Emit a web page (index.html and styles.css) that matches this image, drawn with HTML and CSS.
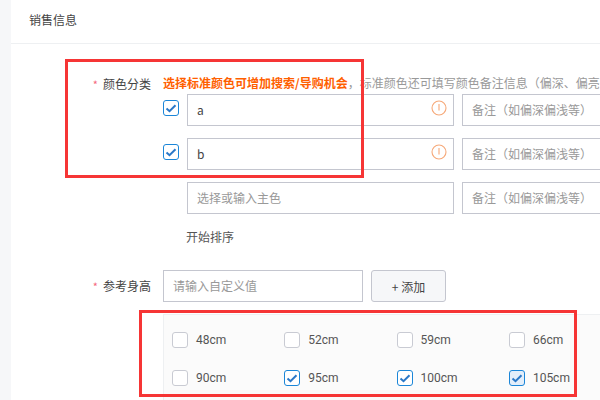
FILE: index.html
```html
<!DOCTYPE html>
<html lang="zh">
<head>
<meta charset="utf-8">
<title>销售信息</title>
<link rel="stylesheet" href="styles.css">
</head>
<body>
<div class="page">
  <aside class="gutter"></aside>
  <main class="card">
    <header class="card-head">销售信息</header>
    <section class="form">
      <div class="row color-row">
        <div class="label"><span class="star">*</span>颜色分类</div>
        <div class="field">
          <div class="hint"><b>选择标准颜色可增加搜索/导购机会</b>，标准颜色还可填写颜色备注信息（偏深、偏亮等）</div>
          <div class="color-line">
            <span class="check on lift"><svg viewBox="0 0 14 14"><path d="M2.5 7.5 5.5 10.2 11.5 4.2"/></svg></span>
            <div class="input main-color"><span class="val">a</span>
              <svg class="info" viewBox="0 0 16 16"><circle cx="8" cy="8" r="7"/><path d="M8 4v6.5"/></svg>
            </div>
            <div class="input note ph">备注（如偏深偏浅等）</div>
          </div>
          <div class="color-line">
            <span class="check on lift"><svg viewBox="0 0 14 14"><path d="M2.5 7.5 5.5 10.2 11.5 4.2"/></svg></span>
            <div class="input main-color"><span class="val">b</span>
              <svg class="info" viewBox="0 0 16 16"><circle cx="8" cy="8" r="7"/><path d="M8 4v6.5"/></svg>
            </div>
            <div class="input note ph">备注（如偏深偏浅等）</div>
          </div>
          <div class="color-line">
            <span class="check-space"></span>
            <div class="input main-color ph">选择或输入主色</div>
            <div class="input note ph">备注（如偏深偏浅等）</div>
          </div>
          <div class="sort">开始排序</div>
        </div>
      </div>
      <div class="row size-row">
        <div class="label"><span class="star">*</span>参考身高</div>
        <div class="field">
          <div class="add-line">
            <div class="input custom ph">请输入自定义值</div>
            <div class="add-btn">+ 添加</div>
          </div>
          <div class="panel">
            <label class="opt"><span class="check"></span>48cm</label>
            <label class="opt"><span class="check"></span>52cm</label>
            <label class="opt"><span class="check"></span>59cm</label>
            <label class="opt"><span class="check"></span>66cm</label>
            <label class="opt"><span class="check"></span>90cm</label>
            <label class="opt"><span class="check on"><svg viewBox="0 0 14 14"><path d="M2.5 7.5 5.5 10.2 11.5 4.2"/></svg></span>95cm</label>
            <label class="opt"><span class="check on"><svg viewBox="0 0 14 14"><path d="M2.5 7.5 5.5 10.2 11.5 4.2"/></svg></span>100cm</label>
            <label class="opt"><span class="check on tint"><svg viewBox="0 0 14 14"><path d="M2.5 7.5 5.5 10.2 11.5 4.2"/></svg></span>105cm</label>
          </div>
        </div>
      </div>
    </section>
  </main>
  <div class="mark mark-a"></div>
  <div class="mark mark-b"></div>
</div>
</body>
</html>
```
FILE: styles.css
```css
* { box-sizing: border-box; }
html, body { margin: 0; padding: 0; }
body {
  font-family: "Noto Sans CJK SC", "Noto Sans", sans-serif;
  font-size: 12px;
  color: #333;
  background: #fff;
}
.page {
  position: relative;
  display: flex;
  width: 600px;
  height: 400px;
  overflow: hidden;
}
.gutter { flex: 0 0 11px; background: #f6f7f9; }
.card { flex: 1 1 auto; min-width: 0; background: #fff; }
.card-head {
  height: 44px;
  padding: 0 0 5px 18px;
  display: flex;
  align-items: center;
  border-bottom: 1px solid #eef0f2;
  color: #444;
}
.form { padding-top: 30px; }
.row { display: flex; }
.label {
  flex: 0 0 140px;
  text-align: right;
  line-height: 20px;
  color: #444;
}
.star { color: #f5677d; margin-right: 5px; font-size: 11px; }
.field { margin-left: 12px; flex: 0 0 auto; }
.hint {
  height: 20px;
  line-height: 18px;
  white-space: nowrap;
  color: #999;
  width: 437px;
  overflow: hidden;
}
.hint b { color: #ff6000; font-weight: 700; }
.color-line { display: flex; align-items: center; gap: 8px; margin-bottom: 12px; width: 460px; }
.check {
  flex: 0 0 16px;
  width: 16px;
  height: 16px;
  border: 1px solid #c9cbd3;
  border-radius: 3px;
  background: #fff;
  display: block;
}
.check.on { border-color: #1b86d8; }
.check.lift { margin-top: -4px; }
.check.tint { background: #e3eefa; }
.check svg { display: block; width: 14px; height: 14px; fill: none; stroke: #2a78c8; stroke-width: 2; }
.check-space { flex: 0 0 16px; }
.input {
  height: 32px;
  border: 1px solid #c4c6cf;
  background: #fff;
  padding: 0 9px 2px;
  display: flex;
  align-items: center;
  white-space: nowrap;
  flex: none;
}
.ph { color: #999; }
.val { color: #444; }
.main-color { width: 267px; justify-content: space-between; padding-right: 6px; }
.note { width: 145px; }
.info { width: 16px; height: 16px; margin-top: -2px; fill: none; stroke: #f6a878; stroke-width: 1.1; }
.sort { margin: 14px 0 0 23px; height: 18px; line-height: 18px; color: #555; }
.size-row { margin-top: 24px; }
.size-row .label { line-height: 31px; }
.add-line { display: flex; gap: 8px; margin-left: 0; }
.custom { width: 200px; }
.add-btn {
  width: 75px;
  height: 32px;
  border: 1px solid #c4c6cf;
  border-radius: 3px;
  background: #f6f7f9;
  color: #444;
  display: flex;
  align-items: center;
  justify-content: center;
}
.panel {
  width: 437px;
  margin-top: 12px;
  padding: 17px 0 0 8px;
  height: 86px;
  background: #fbfbfb;
  border-top: 1px solid #eef0f2;
  border-left: 1px solid #eef0f2;
  display: grid;
  grid-template-columns: repeat(4, 112.3px);
  grid-auto-rows: 38px;
  font-family: Roboto, "Noto Sans", sans-serif;
  color: #555;
}
.opt { display: flex; align-items: flex-start; gap: 8px; line-height: 16px; }
.mark { position: absolute; border: 3px solid #f63535; pointer-events: none; }
.mark-a { left: 65px; top: 59px; width: 299px; height: 119px; }
.mark-b { left: 139px; top: 310px; width: 438px; height: 87px; }
```
